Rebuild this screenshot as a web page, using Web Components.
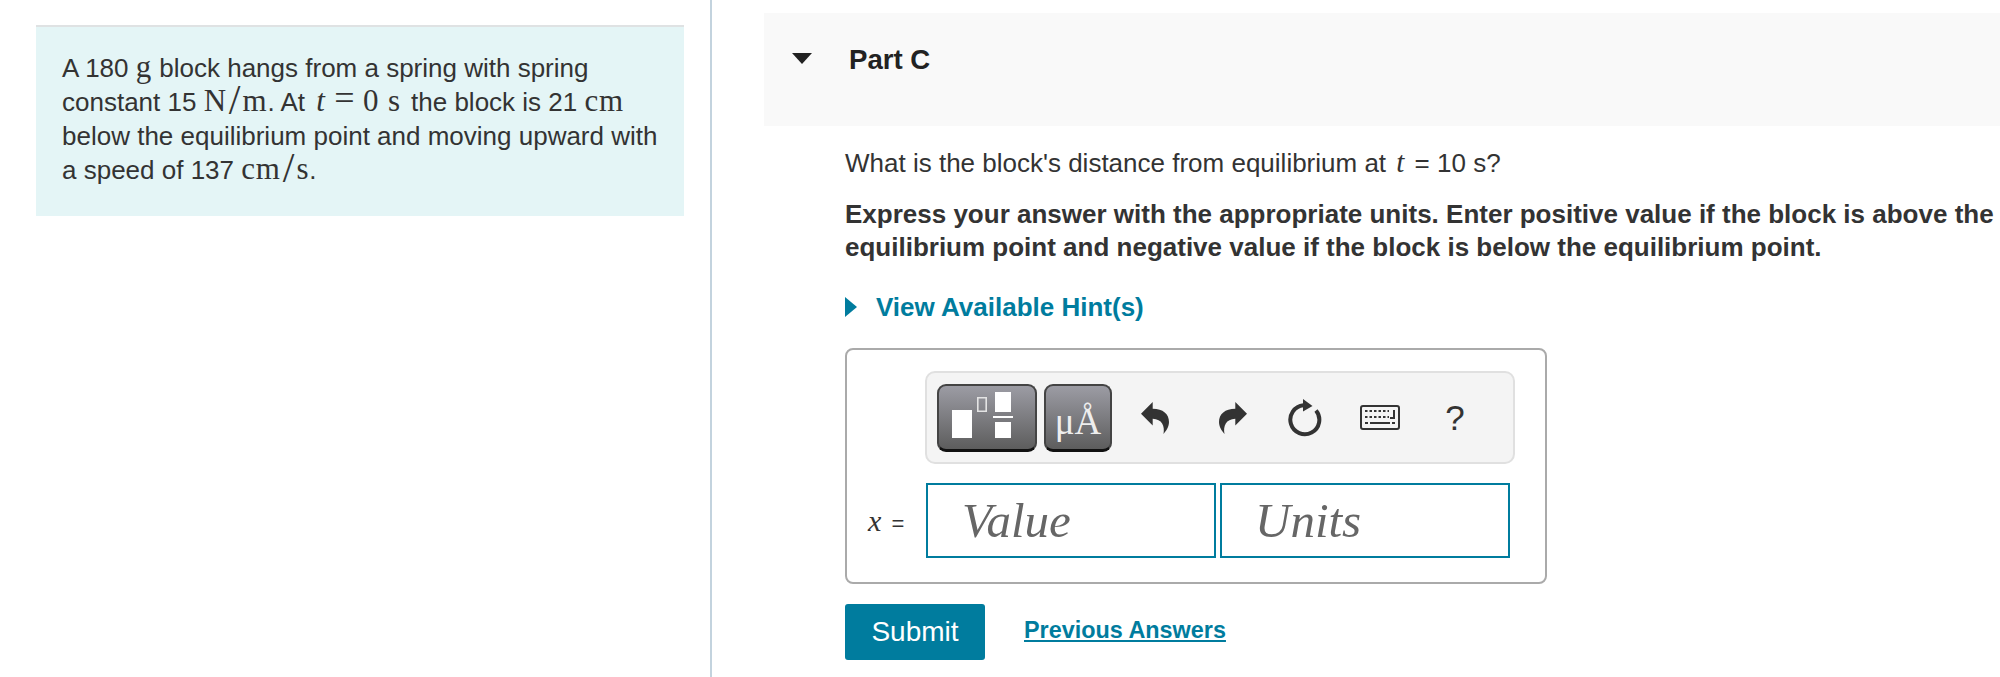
<!DOCTYPE html>
<html lang="en"><head><meta charset="utf-8"><title>Part C</title>
<style>
html,body{margin:0;padding:0;background:#fff;height:677px;overflow:hidden}
body{font-family:"Liberation Sans",Arial,sans-serif;color:#333}
</style></head>
<body>
<x-page>
  <x-problem slot="left">A 180 <x-m>g</x-m> block hangs from a spring with spring<br>constant 15 <x-m>N<x-s>/</x-s>m</x-m>. At <x-m style="margin:0 3px 0 4px"><i>t</i> <x-e>=</x-e> 0 s</x-m> the block is 21 <x-m>cm</x-m><br>below the equilibrium point and moving upward with<br>a speed of 137 <x-m>cm<x-s>/</x-s>s</x-m>.</x-problem>
  <x-part slot="right" label="Part C">
    <x-question>What is the block's distance from equilibrium at <x-q><i>t</i></x-q> = 10 s?</x-question>
    <x-instructions>Express your answer with the appropriate units. Enter positive value if the block is above the equilibrium point and negative value if the block is below the equilibrium point.</x-instructions>
    <x-hint>View Available Hint(s)</x-hint>
    <x-answer></x-answer>
    <x-actions></x-actions>
  </x-part>
</x-page>
<script>
function def(name,css,html){
  customElements.define(name,class extends HTMLElement{
    constructor(){super();const r=this.attachShadow({mode:'open'});r.innerHTML='<style>'+css+'</style>'+(typeof html==='function'?html(this):html);}
  });
}
def('x-page',`:host{display:flex;height:677px;overflow:hidden}
.l{width:648px;margin:25px 26px 0 36px;flex:none}
.d{width:2px;background:#c3d3de;flex:none}
.r{flex:1;min-width:0;margin:13px 0 0 52px}`,
`<div class="l"><slot name="left"></slot></div><div class="d"></div><div class="r"><slot name="right"></slot></div>`);
def('x-problem',`:host{display:block;box-sizing:border-box;height:191px;background:#e4f5f6;border-top:2px solid #dfe2e3;padding:24px 0 0 26px;font-size:26px;line-height:34px;color:#333;white-space:nowrap}`,`<slot></slot>`);
def('x-m',`:host{display:inline;font-family:"Liberation Serif",serif;font-size:31px;letter-spacing:.8px;line-height:0}`,`<slot></slot>`);
def('x-e',`:host{display:inline-block;font-size:36px;line-height:0;letter-spacing:0;transform:translateY(-1px)}`,`<slot></slot>`);
def('x-q',`:host{display:inline;font-family:"Liberation Serif",serif;font-size:29px;line-height:0;padding:0 3px}`,`<slot></slot>`);
def('x-s',`:host{display:inline-block;font-size:42px;line-height:0;letter-spacing:0;margin:0 2px;transform:translateY(3px)}`,`<slot></slot>`);
def('x-part',`:host{display:block}
.h{display:flex;height:113px;background:#f9f9f9;box-sizing:border-box;padding:40px 0 0 28px}
.t{width:0;height:0;border-left:10px solid transparent;border-right:10px solid transparent;border-top:11px solid #222}
.n{margin:-11px 0 0 37px;font-weight:700;font-size:27.6px;line-height:36px;color:#222}
.b{padding:20px 0 0 81px}`,
el=>`<div class="h"><div class="t"></div><div class="n">${el.getAttribute('label')}</div></div><div class="b"><slot></slot></div>`);
def('x-question',`:host{display:block;font-size:26px;line-height:34px;color:#333}`,`<slot></slot>`);
def('x-instructions',`:host{display:block;margin-top:18px;font-size:26px;line-height:33px;font-weight:700;color:#333}`,`<slot></slot>`);
def('x-hint',`:host{display:flex;align-items:center;margin-top:26px;height:34px;font-size:26px;font-weight:700;color:#007c9e}
.a{width:0;height:0;border-top:10px solid transparent;border-bottom:10px solid transparent;border-left:12px solid #007c9e;margin-right:19px}`,
`<span class="a"></span><slot></slot>`);
def('x-answer',`:host{display:block;box-sizing:border-box;width:702px;height:236px;margin-top:24px;border:2px solid #aaa;border-radius:8px;padding:21px 30px 0 0}
.row{display:flex;align-items:center;margin-top:19px}
.lab{width:79px;box-sizing:border-box;padding-left:21px;font-size:22px;color:#333;white-space:nowrap}
.lab i{font-family:"Liberation Serif",serif;font-size:30px;margin-right:4px}`,
`<x-toolbar></x-toolbar><div class="row"><span class="lab"><i>x</i> =</span><x-input>Value</x-input><x-input style="margin-left:4px;padding-left:33px">Units</x-input></div>`);
def('x-input',`:host{display:flex;align-items:center;box-sizing:border-box;width:290px;height:75px;border:2px solid #007c9e;padding-left:34px;font:italic 49px/1 "Liberation Serif",serif;color:#666;background:#fff}`,`<slot></slot>`);
def('x-toolbar',`:host{display:flex;align-items:center;box-sizing:border-box;width:590px;height:93px;margin-left:78px;background:#f4f4f4;border:2px solid #e0e0e0;border-radius:10px;padding-left:10px}
.btn{box-sizing:border-box;height:68px;border-radius:9px;border:2px solid #444;border-bottom:3px solid #111;background:linear-gradient(#9c9ca4,#5d5d5d);flex:none;display:flex;align-items:center;justify-content:center}
.b1{width:100px}.b2{width:68px;margin-left:7px;color:#eee;font:37px/1 "Liberation Serif",serif}
.b2 span{display:block;margin-top:8px}
svg{display:block;flex:none}
.q{font-size:35px;color:#333;margin-left:45px;width:20px;text-align:center}`,
`<div class="btn b1"><svg width="96" height="63" viewBox="0 0 96 63"><path fill="#fff" d="M13 24h20v28H13zM56 6h16v20H56zM54 30h20v2H54zM56 36h16v16H56z"/><path fill="none" stroke="#e4e4e4" stroke-width="1.6" d="M38.800 11.800h8.400v13.400h-8.400z"/></svg></div>
<div class="btn b2"><span>μÅ</span></div>
<svg style="margin-left:29px" width="28" height="32" viewBox="0 0 28 32"><path fill="#333" d="M0 11.700 11.700 0v6.700C22 6.700 28 12 28 20c0 5-3 9-5.500 12C24 24 21 17 11.700 16.700v6.800z"/></svg>
<svg style="margin-left:50px" width="28" height="32" viewBox="0 0 28 32"><path fill="#333" d="M28 11.700 16.300 0v6.700C6 6.700 0 12 0 20c0 5 3 9 5.500 12C4 24 7 17 16.300 16.700v6.800z"/></svg>
<svg style="margin-left:41px" width="34" height="38" viewBox="0 0 34 38"><path fill="none" stroke="#333" stroke-width="4" d="M15.500 6.300A14.500 14.500 0 1 0 28 11.500"/><path fill="#333" d="M15 0l9.500 7L15 12.500z"/></svg>
<svg style="margin-left:38px" width="40" height="25" viewBox="0 0 40 25"><rect x="1" y="1" width="38" height="23" rx="2" fill="#f4f4f4" stroke="#333" stroke-width="2"/><path fill="none" stroke="#333" stroke-width="2" stroke-dasharray="2.500 2" d="M5 6h24M5 12h24"/><path fill="none" stroke="#333" stroke-width="2" d="M34 5v8h-4M5 18h3M10 18h20M32 18h3"/></svg>
<div class="q">?</div>`);
def('x-actions',`:host{display:flex;align-items:center;margin-top:20px}
.s{box-sizing:border-box;width:140px;height:56px;background:#007c9e;color:#fff;border-radius:3px;font-size:28px;display:flex;align-items:center;justify-content:center}
.p{margin:-3px 0 0 39px;color:#007c9e;font-weight:700;font-size:23.4px;text-decoration:underline}`,
`<div class="s">Submit</div><span class="p">Previous Answers</span>`);
</script>
</body></html>
